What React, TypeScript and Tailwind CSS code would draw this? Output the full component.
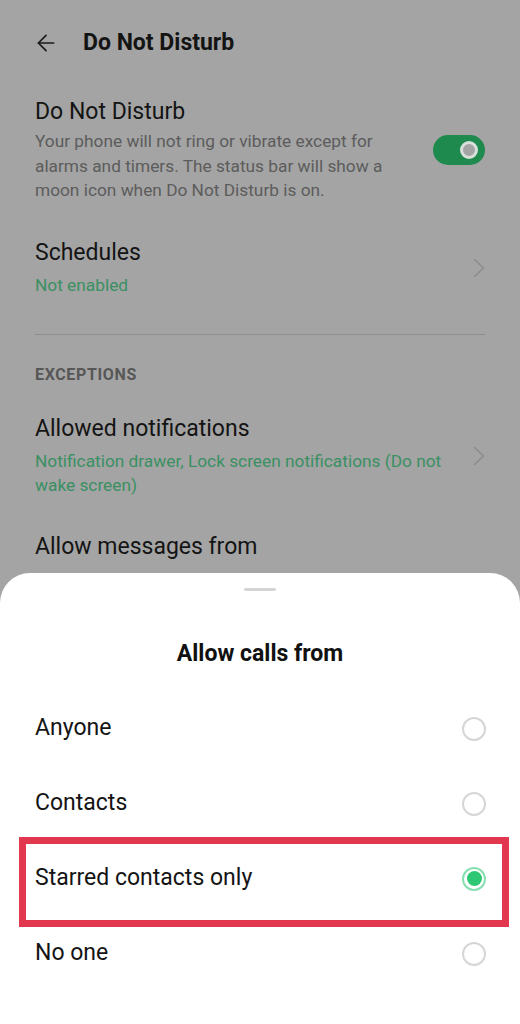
import { ArrowLeft } from 'lucide-react';

const Chevron = () => (
  <svg width="12" height="20" viewBox="0 0 12 20" fill="none" className="shrink-0">
    <path d="M1.5 1.5 L10.5 10 L1.5 18.5" stroke="#8c8c8c" strokeWidth="1.6" strokeLinecap="round" strokeLinejoin="round" />
  </svg>
);

const Radio = ({ checked }: { checked?: boolean }) =>
  checked ? (
    <span className="flex size-6 items-center justify-center rounded-full border-2 border-[#86dfb0]">
      <span className="size-[15px] rounded-full bg-[#2ec874]" />
    </span>
  ) : (
    <span className="size-6 rounded-full border-2 border-[#d6d6d6]" />
  );

const options = ['Anyone', 'Contacts', 'Starred contacts only', 'No one'];

const App = () => {
  return (
    <div
      className="relative h-[1024px] w-[520px] overflow-hidden bg-[#a4a4a4] text-[#141414]"
      style={{ fontFamily: 'Roboto, "Noto Sans", sans-serif' }}
    >
      <div className="flex h-[86px] items-center px-[33px]">
        <ArrowLeft className="size-[26px] text-[#1a1a1a]" strokeWidth={1.6} />
        <h1 className="ml-[24px] text-[23px] font-bold">Do Not Disturb</h1>
      </div>

      <div className="px-[35px]">
        <div className="mt-[12px] flex items-center gap-6">
          <div className="flex-1">
            <p className="text-[23px] leading-[28px]">Do Not Disturb</p>
            <p className="mt-[3px] text-[17.3px] leading-[24.5px] text-[#5c5c5c]">
              Your phone will not ring or vibrate except for alarms and timers. The status bar will show a moon icon
              when Do Not Disturb is on.
            </p>
          </div>
          <div className="flex h-[30px] w-[52px] shrink-0 items-center justify-end rounded-full bg-[#1f8a4e] pr-[7px]">
            <span className="size-[18px] rounded-full border-[3px] border-[#d9dfdb] bg-[#a4a4a4]" />
          </div>
        </div>

        <div className="mt-[36px] flex items-center">
          <div className="flex-1">
            <p className="text-[23px] leading-[28px]">Schedules</p>
            <p className="mt-[6px] text-[17.3px] leading-[24px] text-[#3a9063]">Not enabled</p>
          </div>
          <Chevron />
        </div>

        <div className="mt-[37px] h-px bg-[#8f8f8f]" />

        <p className="mt-[30px] text-[16px] font-bold leading-[20px] tracking-[0.04em] text-[#575757]">EXCEPTIONS</p>

        <div className="mt-[30px] flex items-center gap-6">
          <div className="flex-1">
            <p className="text-[23px] leading-[28px]">Allowed notifications</p>
            <p className="mt-[6px] text-[17.3px] leading-[24px] text-[#3a9063]">
              Notification drawer, Lock screen notifications (Do not wake screen)
            </p>
          </div>
          <Chevron />
        </div>

        <div className="mt-[36px]">
          <p className="text-[23px] leading-[28px]">Allow messages from</p>
          <p className="mt-[6px] text-[17.3px] leading-[24px] text-[#3a9063]">None</p>
        </div>
      </div>

      <div className="absolute inset-x-0 bottom-0 h-[451px] rounded-t-[30px] bg-white">
        <div className="flex justify-center pt-[15px]">
          <span className="h-[3px] w-[32px] rounded-full bg-[#d4d4d4]" />
        </div>
        <p className="mt-[50px] text-center text-[23px] font-bold leading-[26px] text-[#111]">Allow calls from</p>
        <div className="mt-[24px]">
          {options.map((o, i) => (
            <div key={o} className="relative flex h-[75px] items-center justify-between pl-[35px] pr-[34px]">
              <span className="text-[23px] text-[#141414]">{o}</span>
              <Radio checked={i === 2} />
              {i === 2 && (
                <span className="pointer-events-none absolute left-[19px] right-[11px] top-[-4px] bottom-[-11px] border-[7px] border-[#e2384f]" />
              )}
            </div>
          ))}
        </div>
      </div>
    </div>
  );
};

export default App;
